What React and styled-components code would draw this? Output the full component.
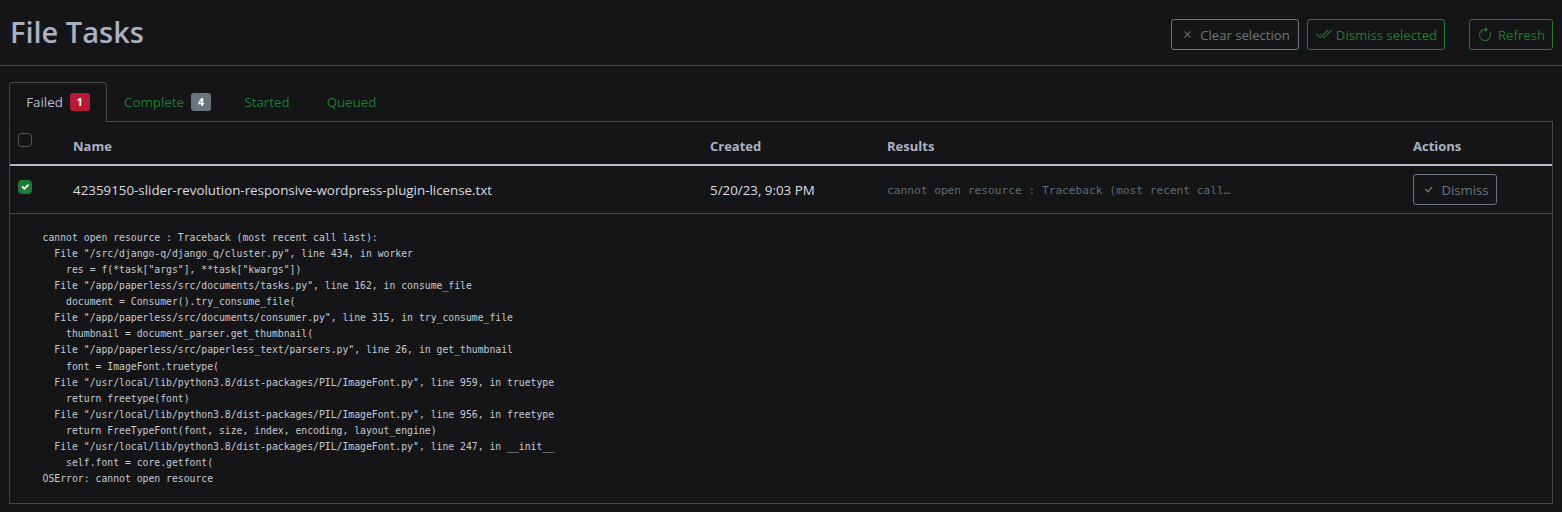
import React from "react";
import styled, { createGlobalStyle } from "styled-components";
import { BsX, BsCheck2All, BsArrowClockwise, BsCheck } from "react-icons/bs";

const Global = createGlobalStyle`
  html, body { margin: 0; padding: 0; background: #151517; }
  body { font-family: "Open Sans", "Noto Sans", sans-serif; color: #abb2c3; }
  * { box-sizing: border-box; }
`;

const Page = styled.div`
  width: 1562px;
  height: 512px;
  overflow: hidden;
  padding: 0 9px 0 9px;
`;

const Header = styled.header`
  height: 66px;
  margin: 0 -9px;
  padding: 0 9px 0 10px;
  border-bottom: 1px solid #47474b;
  display: flex;
  align-items: flex-start;
  justify-content: space-between;
`;

const Title = styled.h1`
  margin: 12px 0 0;
  font-size: 29px;
  line-height: 40px;
  font-weight: 600;
  color: #a9b0c2;
`;

const Actions = styled.div`
  display: flex;
  margin-top: 19px;
`;

const Button = styled.button`
  height: 31px;
  border: 1px solid ${(p) => p.$color};
  border-radius: 3px;
  background: transparent;
  color: ${(p) => p.$color};
  display: inline-flex;
  align-items: center;
  justify-content: center;
  gap: ${(p) => p.$gap || 5}px;
  padding: 0;
  width: ${(p) => p.$w}px;
  margin-left: ${(p) => p.$ml || 0}px;
  font-family: inherit;
  font-size: 13.15px;
  white-space: nowrap;
`;

const Tabs = styled.nav`
  display: flex;
  height: 40px;
  margin-top: 16px;
  border-bottom: 1px solid #47474b;
`;

const Tab = styled.div`
  height: 40px;
  width: ${(p) => p.$w}px;
  display: flex;
  align-items: center;
  justify-content: center;
  gap: 7px;
  font-size: 13.3px;
  color: ${(p) => (p.$active ? "#b7bdcc" : "#217a2f")};
  background: ${(p) => (p.$active ? "#151517" : "transparent")};
  border: 1px solid ${(p) => (p.$active ? "#47474b" : "transparent")};
  border-bottom-color: ${(p) => (p.$active ? "#151517" : "transparent")};
  border-radius: 4px 4px 0 0;
`;

const Badge = styled.span`
  display: inline-flex;
  align-items: center;
  justify-content: center;
  width: 20px;
  height: 18px;
  border-radius: 3px;
  background: ${(p) => p.$bg};
  color: #fff;
  font-size: 10.5px;
  font-weight: 700;
`;

const Table = styled.table`
  width: 1544px;
  table-layout: fixed;
  border-collapse: separate;
  border-spacing: 0;
  border-left: 1px solid #47474b;
  border-right: 1px solid #47474b;
  border-bottom: 1px solid #47474b;
`;

const Th = styled.th`
  height: 44px;
  padding: 5px 8px 0;
  text-align: left;
  font-size: 13px;
  font-weight: 700;
  color: #abb2c3;
  border-bottom: 2px solid #b4b8c6;
`;

const Td = styled.td`
  height: 48px;
  padding: 0 8px;
  font-size: 13.35px;
  color: #d8dbe3;
  border-bottom: 1px solid #47474b;
  white-space: nowrap;
`;

const CheckCell = styled.div`
  width: 14px;
  height: 14px;
  margin-top: ${(p) => p.$top}px;
  border-radius: 3.5px;
  border: 1px solid ${(p) => (p.$on ? "#1f7a33" : "#55555a")};
  background: ${(p) => (p.$on ? "#1f7a33" : "transparent")};
  display: flex;
  align-items: center;
  justify-content: center;
`;

const Result = styled.code`
  display: block;
  margin-top: 2px;
  font-family: "DejaVu Sans Mono", monospace;
  font-size: 11.2px;
  color: #5f6b75;
`;

const Detail = styled.td`
  height: 289px;
  padding: 0;
  vertical-align: top;
`;

const Pre = styled.pre`
  margin: 0;
  padding: 16px 0 0 32.6px;
  font-family: "DejaVu Sans Mono", monospace;
  font-size: 9.77px;
  line-height: 16.07px;
  color: #c6cad4;
`;

const trace = `cannot open resource : Traceback (most recent call last):
  File "/src/django-q/django_q/cluster.py", line 434, in worker
    res = f(*task["args"], **task["kwargs"])
  File "/app/paperless/src/documents/tasks.py", line 162, in consume_file
    document = Consumer().try_consume_file(
  File "/app/paperless/src/documents/consumer.py", line 315, in try_consume_file
    thumbnail = document_parser.get_thumbnail(
  File "/app/paperless/src/paperless_text/parsers.py", line 26, in get_thumbnail
    font = ImageFont.truetype(
  File "/usr/local/lib/python3.8/dist-packages/PIL/ImageFont.py", line 959, in truetype
    return freetype(font)
  File "/usr/local/lib/python3.8/dist-packages/PIL/ImageFont.py", line 956, in freetype
    return FreeTypeFont(font, size, index, encoding, layout_engine)
  File "/usr/local/lib/python3.8/dist-packages/PIL/ImageFont.py", line 247, in __init__
    self.font = core.getfont(
OSError: cannot open resource`;

const TickMark = () => (
  <svg width="14" height="14" viewBox="0 0 20 20" fill="none">
    <path d="M6 10l3 3 6-6" stroke="#fff" strokeWidth="3" strokeLinecap="round" strokeLinejoin="round" />
  </svg>
);

export default function App() {
  return (
    <Page>
      <Global />
      <Header>
        <Title>File Tasks</Title>
        <Actions>
          <Button $color="#6c757d" $w={128} $gap={5}><BsX size={15} />Clear selection</Button>
          <Button $color="#217a2f" $w={138} $ml={8} $gap={4}><BsCheck2All size={17} />Dismiss selected</Button>
          <Button $color="#217a2f" $w={84} $ml={24}><BsArrowClockwise size={16} />Refresh</Button>
        </Actions>
      </Header>
      <Tabs>
        <Tab $active $w={98}>Failed <Badge $bg="#b51b38">1</Badge></Tab>
        <Tab $w={121}>Complete <Badge $bg="#6c757d">4</Badge></Tab>
        <Tab $w={78}>Started</Tab>
        <Tab $w={91}>Queued</Tab>
      </Tabs>
      <Table>
        <colgroup>
          <col style={{ width: 55 }} />
          <col style={{ width: 637 }} />
          <col style={{ width: 177 }} />
          <col style={{ width: 526 }} />
          <col />
        </colgroup>
        <thead>
          <tr>
            <Th><CheckCell $top={-12} /></Th>
            <Th>Name</Th>
            <Th>Created</Th>
            <Th>Results</Th>
            <Th>Actions</Th>
          </tr>
        </thead>
        <tbody>
          <tr>
            <Td><CheckCell $on $top={-5}><TickMark /></CheckCell></Td>
            <Td>42359150-slider-revolution-responsive-wordpress-plugin-license.txt</Td>
            <Td>5/20/23, 9:03 PM</Td>
            <Td><Result>cannot open resource : Traceback (most recent call…</Result></Td>
            <Td><Button $color="#6c757d" $w={84} $gap={5}><BsCheck size={15} />Dismiss</Button></Td>
          </tr>
          <tr>
            <Detail colSpan={5}><Pre>{trace}</Pre></Detail>
          </tr>
        </tbody>
      </Table>
    </Page>
  );
}
